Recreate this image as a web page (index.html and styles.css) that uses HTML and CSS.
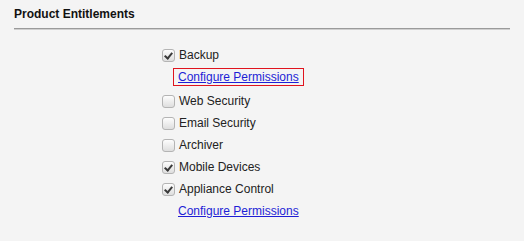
FILE: index.html
```html
<!DOCTYPE html>
<html lang="en">
<head>
    <meta charset="UTF-8">
    <title>Product Entitlements</title>
    <link rel="stylesheet" href="styles.css">
</head>
<body>
    <div id="entitlements">
        <h3>Product Entitlements</h3>
        <ul>
            <li><span class="chk on"></span>Backup</li>
            <li class="sub"><a class="focus" href="#">Configure Permissions</a></li>
            <li><span class="chk"></span>Web Security</li>
            <li><span class="chk"></span>Email Security</li>
            <li><span class="chk"></span>Archiver</li>
            <li><span class="chk on"></span>Mobile Devices</li>
            <li><span class="chk on"></span>Appliance Control</li>
            <li class="sub"><a href="#">Configure Permissions</a></li>
        </ul>
    </div>
</body>
</html>
```

FILE: styles.css
```css
* {
    margin: 0;
    padding: 0;
}
html, body {
    background: #f4f4f4;
}
body {
    font: 12px/1.5 "Liberation Sans", Arial, sans-serif;
    color: #222;
}
#entitlements {
    padding: 6px 14px 0 14px;
}
#entitlements h3 {
    font: 700 12px/16px "Liberation Sans", Arial, sans-serif;
    color: #111;
    padding-bottom: 6px;
    border-bottom: 1px solid #9a9a9a;
    box-shadow: 0 1px 0 #cfcfcf;
}
#entitlements ul {
    list-style-type: none;
    margin-top: 15px;
    padding-left: 148px;
}
#entitlements li {
    display: flex;
    align-items: center;
    height: 22px;
}
#entitlements li.sub {
    height: 22px;
    padding-bottom: 2px;
    padding-left: 16px;
}
.chk {
    box-sizing: border-box;
    width: 13px;
    height: 13px;
    margin-right: 4px;
    border: 1px solid #b4b4b4;
    border-radius: 3px;
    background: linear-gradient(#fdfdfd, #dedede);
    position: relative;
}
.chk.on::after {
    content: "";
    position: absolute;
    left: 3px;
    top: 1px;
    width: 3px;
    height: 6px;
    border: solid #3a3a3a;
    border-width: 0 2px 2px 0;
    transform: rotate(40deg);
}
#entitlements a {
    color: #1e1ed6;
    text-decoration: underline;
    line-height: 16px;
}
#entitlements a.focus {
    border: 1px solid #e0141e;
    padding: 0 4px;
    margin-left: -5px;
}
```
